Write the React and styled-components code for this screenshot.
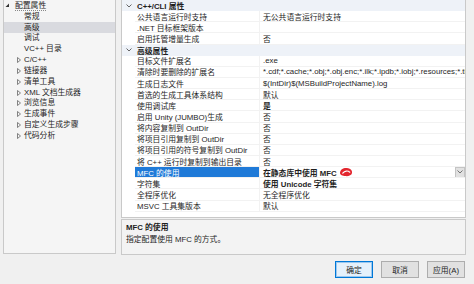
import React from 'react';
import styled, { createGlobalStyle } from 'styled-components';

const Global = createGlobalStyle`
  html, body { margin: 0; padding: 0; background: #f0f0f0; }
  body {
    width: 474px; height: 284px; overflow: hidden;
    font-family: "Liberation Sans", "Noto Sans CJK SC", sans-serif;
    font-size: 7.8px; color: #1e1e1e;
  }
  * { box-sizing: border-box; }
`;

const Dialog = styled.div`
  width: 474px; height: 284px;
  display: flex; flex-direction: column;
  padding-right: 8px;
  background: #f0f0f0;
`;

const Main = styled.div`
  display: flex; gap: 5px; height: 255px; padding-left: 3px;
`;

const TreePanel = styled.div`
  width: 113px; height: 254px;
  background: #f5f5f5;
  border: 1px solid #c9c9c9; border-top: none;
  padding-top: 0.5px;
`;

const TreeItem = styled.div`
  height: 10.83px; display: flex; align-items: center;
  padding-left: ${p => (p.$level === 0 ? 1 : 13)}px;
  background: ${p => (p.$selected ? '#d9dadf' : 'transparent')};
  white-space: nowrap;
`;

const Arrow = styled.span`
  width: ${p => (p.$level === 0 ? 10 : 7)}px;
  display: flex; align-items: center; flex: none;
`;

const TreeText = styled.span`
  line-height: 10px;
  ${p => p.$focus && 'border-bottom: 1px dotted #888; line-height: 9px;'}
`;

const RightPane = styled.div`
  flex: 1; display: flex; flex-direction: column; gap: 1px;
`;

const Grid = styled.div`
  height: 218px; background: #fff;
  border: 1px solid #c9c9c9; border-top: none;
  overflow: hidden;
`;

const Row = styled.div`
  height: 11.15px;
  display: grid; grid-template-columns: 13px 125px 1fr;
  background: ${p => (p.$category ? '#eef2f8' : '#fff')};
`;

const Gutter = styled.div`
  display: flex; align-items: center; padding-left: 4px;
`;

const Label = styled.div`
  display: flex; align-items: center;
  padding-left: 2px;
  white-space: nowrap; overflow: hidden;
  font-weight: ${p => (p.$category ? 700 : 400)};
  grid-column: ${p => (p.$category ? '2 / 4' : 'auto')};
  background: ${p => (p.$selected ? '#1f7ad8' : 'transparent')};
  color: ${p => (p.$selected ? '#fff' : '#1e1e1e')};
  border-bottom: ${p => (p.$category ? 'none' : '1px solid #f2f2f2')};
  border-right: ${p => (p.$category ? 'none' : '1px solid #f2f2f2')};
`;

const Value = styled.div`
  display: flex; align-items: center;
  padding-left: 3px;
  white-space: nowrap; overflow: hidden;
  font-weight: ${p => (p.$bold ? 700 : 400)};
  border-bottom: 1px solid #f2f2f2;
`;

const Blob = styled.svg`
  margin-left: 2px; flex: none;
`;

const DropButton = styled.div`
  margin-left: auto; flex: none;
  width: 10px; height: 11px;
  background: #e1e1e1; border: 1px solid #c4c4c4;
  display: flex; align-items: center; justify-content: center;
`;

const Description = styled.div`
  height: 36px;
  background: #f3f3f3;
  border: 1px solid #c9c9c9;
  padding: 2px 4px;
  display: flex; flex-direction: column;
`;

const DescTitle = styled.div`
  font-weight: 700; line-height: 12px;
`;

const DescText = styled.div`
  line-height: 12px;
`;

const ButtonBar = styled.div`
  flex: 1; display: flex; justify-content: flex-end; align-items: flex-start;
  gap: 8px; padding-top: 6px; padding-right: 1px;
`;

const Button = styled.button`
  width: 38px; height: 17px; padding: 0;
  font: inherit; color: #1e1e1e;
  background: ${p => (p.$default ? '#e5f1fb' : '#e1e1e1')};
  border: 1px solid ${p => (p.$default ? '#0078d7' : '#adadad')};
  ${p => p.$default && 'box-shadow: inset 0 0 0 1px #9cc8ef;'}
`;

const Chevron = ({ color = '#444' }) => (
  <svg width="6" height="4" viewBox="0 0 6 4">
    <path d="M0.5 0.5 L3 3 L5.5 0.5" stroke={color} strokeWidth="0.9" fill="none" />
  </svg>
);

const Expanded = () => (
  <svg width="5" height="5" viewBox="0 0 5 5">
    <polygon points="4,0.5 4,4 0.5,4" fill="#333" />
  </svg>
);

const Collapsed = () => (
  <svg width="4" height="6" viewBox="0 0 4 6">
    <polygon points="0.5,0.5 3.5,3 0.5,5.5" fill="none" stroke="#666" strokeWidth="0.8" />
  </svg>
);

const tree = [
  { t: '配置属性', level: 0, arrow: 'open', focus: true },
  { t: '常规', level: 1 },
  { t: '高级', level: 1, selected: true },
  { t: '调试', level: 1 },
  { t: 'VC++ 目录', level: 1 },
  { t: 'C/C++', level: 1, arrow: 'closed' },
  { t: '链接器', level: 1, arrow: 'closed' },
  { t: '清单工具', level: 1, arrow: 'closed' },
  { t: 'XML 文档生成器', level: 1, arrow: 'closed' },
  { t: '浏览信息', level: 1, arrow: 'closed' },
  { t: '生成事件', level: 1, arrow: 'closed' },
  { t: '自定义生成步骤', level: 1, arrow: 'closed' },
  { t: '代码分析', level: 1, arrow: 'closed' },
];

const rows = [
  { cat: 'C++/CLI 属性' },
  { l: '公共语言运行时支持', v: '无公共语言运行时支持' },
  { l: '.NET 目标框架版本', v: '' },
  { l: '启用托管增量生成', v: '否' },
  { cat: '高级属性' },
  { l: '目标文件扩展名', v: '.exe' },
  { l: '清除时要删除的扩展名', v: '*.cdf;*.cache;*.obj;*.obj.enc;*.ilk;*.ipdb;*.iobj;*.resources;*.tlb;*.tli;*.tlh;*.tmp;*.rsp' },
  { l: '生成日志文件', v: '$(IntDir)$(MSBuildProjectName).log' },
  { l: '首选的生成工具体系结构', v: '默认' },
  { l: '使用调试库', v: '是', bold: true },
  { l: '启用 Unity (JUMBO)生成', v: '否' },
  { l: '将内容复制到 OutDir', v: '否' },
  { l: '将项目引用复制到 OutDir', v: '否' },
  { l: '将项目引用的符号复制到 OutDir', v: '否' },
  { l: '将 C++ 运行时复制到输出目录', v: '否' },
  { l: 'MFC 的使用', v: '在静态库中使用 MFC', bold: true, selected: true },
  { l: '字符集', v: '使用 Unicode 字符集', bold: true },
  { l: '全程序优化', v: '无全程序优化' },
  { l: 'MSVC 工具集版本', v: '默认' },
];

export default function App() {
  return (
    <Dialog>
      <Global />
      <Main>
        <TreePanel>
          {tree.map((it, i) => (
            <TreeItem key={i} $level={it.level} $selected={it.selected}>
              <Arrow $level={it.level}>
                {it.arrow === 'open' && <Expanded />}
                {it.arrow === 'closed' && <Collapsed />}
              </Arrow>
              <TreeText $focus={it.focus}>{it.t}</TreeText>
            </TreeItem>
          ))}
        </TreePanel>
        <RightPane>
          <Grid>
            {rows.map((r, i) =>
              r.cat ? (
                <Row key={i} $category>
                  <Gutter><Chevron color="#555" /></Gutter>
                  <Label $category>{r.cat}</Label>
                </Row>
              ) : (
                <Row key={i}>
                  <Gutter />
                  <Label $selected={r.selected}>{r.l}</Label>
                  <Value $bold={r.bold}>
                    {r.v}
                    {r.selected && (
                      <>
                        <Blob width="14" height="10" viewBox="0 0 14 10">
                          <path d="M1 6 C1 2.5 4.5 0.6 8 1 C11 1.4 13.5 3 13 6 C12.6 8.4 9.5 9.4 6.5 9.1 C3.5 8.8 1 8 1 6Z" fill="#e3262e" />
                          <path d="M3.8 6.2 C5.8 3.6 8.8 3.4 10.8 5.2" stroke="#fff" strokeWidth="1.2" fill="none" strokeLinecap="round" />
                        </Blob>
                        <DropButton><Chevron color="#666" /></DropButton>
                      </>
                    )}
                  </Value>
                </Row>
              )
            )}
          </Grid>
          <Description>
            <DescTitle>MFC 的使用</DescTitle>
            <DescText>指定配置使用 MFC 的方式。</DescText>
          </Description>
        </RightPane>
      </Main>
      <ButtonBar>
        <Button $default>确定</Button>
        <Button>取消</Button>
        <Button>应用(A)</Button>
      </ButtonBar>
    </Dialog>
  );
}
